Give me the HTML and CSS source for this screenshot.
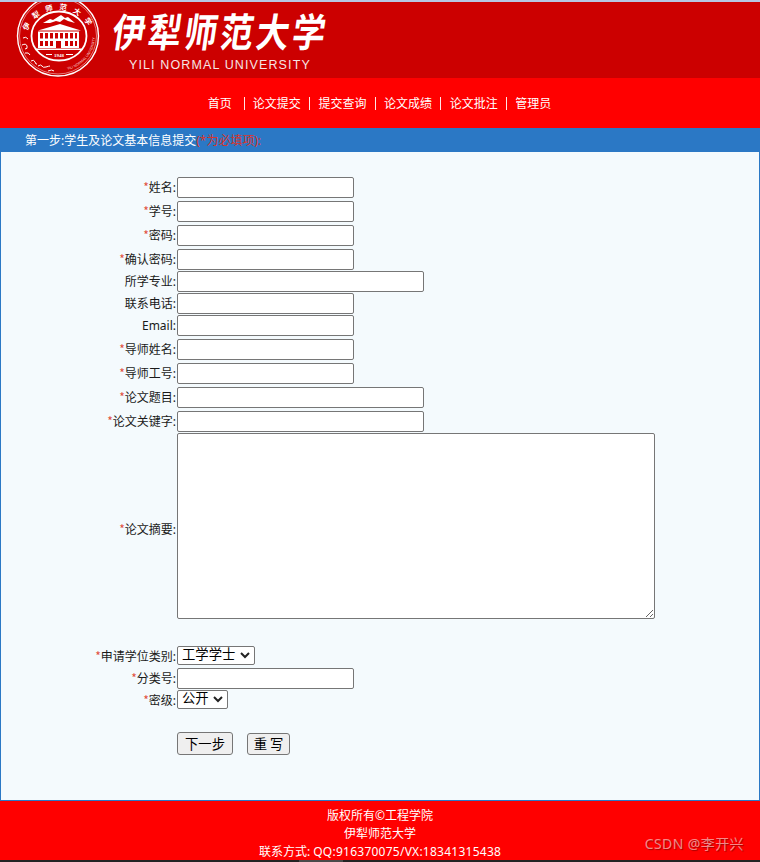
FILE: index.html
```html
<!DOCTYPE html>
<html lang="zh">
<head>
<meta charset="utf-8">
<title>伊犁师范大学</title>
<link rel="stylesheet" href="styles.css">
</head>
<body>
<div class="page">
  <header class="banner">
    <svg class="seal" viewBox="0 2 110 76" width="110" height="76" aria-hidden="true">
      <defs>
        <path id="arcTop" d="M27 38 A32 28 0 0 1 91 38"/>
        <path id="arcBottom" d="M68 69.700 A37 35 0 0 0 95 38"/>
      </defs>
      <ellipse class="ring" cx="58" cy="36" rx="40.500" ry="40"/>
      <ellipse class="ring-thin" cx="58" cy="36" rx="38.500" ry="38"/>
      <ellipse class="ring ring-inner" cx="59" cy="36" rx="27.500" ry="24.500"/>
      <text class="seal-cn"><textPath href="#arcTop" startOffset="50%" text-anchor="middle">伊犁师范大学</textPath></text>
      <text class="seal-en"><textPath href="#arcBottom" startOffset="50%" text-anchor="middle">YILI NORMAL UNIVERSITY</textPath></text>
      <path class="line" d="M23 38 q3 -2 5 1 M22 45 q4 -2 5 1 t-2 3 M25 53 q4 -1 5 2 M31 61 q3 -2 4 1 t2 2 M38 66 q3 -2 4 0 t4 1 t4 -1 M48 71 q4 -2 6 0"/>
      <path class="fill" d="M43 23 L50 19 L53 20 L61 15 L65 18 L68 17 L75 23 L68 21 L64 19 L60 22 L56 21 L50 23Z"/>
      <path class="fill" d="M60 24 L38 30.500 L81 30.500Z"/>
      <rect class="fill" x="38" y="31.500" width="41" height="16.500"/>
      <g class="win">
        <rect x="40" y="33" width="3" height="5.500"/><rect x="45" y="33" width="3" height="5.500"/><rect x="50" y="33" width="3" height="5.500"/><rect x="55" y="33" width="3" height="5.500"/><rect x="60" y="33" width="3" height="5.500"/><rect x="65" y="33" width="3" height="5.500"/><rect x="70" y="33" width="3" height="5.500"/><rect x="75" y="33" width="2" height="5.500"/>
        <rect x="40" y="41" width="3" height="5"/><rect x="45" y="41" width="3" height="5"/><rect x="50" y="41" width="3" height="5"/><rect x="56" y="41" width="5" height="7"/><rect x="65" y="41" width="3" height="5"/><rect x="70" y="41" width="3" height="5"/><rect x="75" y="41" width="2" height="5"/>
      </g>
      <rect class="fill" x="36" y="48.500" width="46" height="1.500"/>
      <path class="line" d="M46 54.500 H52 M66 54.500 H73"/>
      <text class="seal-year" x="59" y="56.500" text-anchor="middle">1948</text>
    </svg>
    <div class="brand">
      <div class="brand-cn">伊犁师范大学</div>
      <div class="brand-en">YILI NORMAL UNIVERSITY</div>
    </div>
  </header>

  <nav class="nav">
    <a class="nav-link nav-first">首页</a><span class="sep"></span>
    <a class="nav-link">论文提交</a><span class="sep"></span>
    <a class="nav-link">提交查询</a><span class="sep"></span>
    <a class="nav-link">论文成绩</a><span class="sep"></span>
    <a class="nav-link">论文批注</a><span class="sep"></span>
    <a class="nav-link">管理员</a>
  </nav>

  <div class="step">第一步:学生及论文基本信息提交<span class="step-note">(*为必填项):</span></div>

  <form class="form">
    <div class="row"><label class="lbl"><i>*</i>姓名:</label><input class="field" type="text"></div>
    <div class="row"><label class="lbl"><i>*</i>学号:</label><input class="field" type="text"></div>
    <div class="row"><label class="lbl"><i>*</i>密码:</label><input class="field" type="password"></div>
    <div class="row"><label class="lbl"><i>*</i>确认密码:</label><input class="field" type="password"></div>
    <div class="row row-plain"><label class="lbl">所学专业:</label><input class="field field-wide" type="text"></div>
    <div class="row row-plain"><label class="lbl">联系电话:</label><input class="field" type="text"></div>
    <div class="row row-plain"><label class="lbl">Email:</label><input class="field" type="text"></div>
    <div class="row"><label class="lbl"><i>*</i>导师姓名:</label><input class="field" type="text"></div>
    <div class="row"><label class="lbl"><i>*</i>导师工号:</label><input class="field" type="text"></div>
    <div class="row"><label class="lbl"><i>*</i>论文题目:</label><input class="field field-wide" type="text"></div>
    <div class="row"><label class="lbl"><i>*</i>论文关键字:</label><input class="field field-wide" type="text"></div>
    <div class="row row-area"><label class="lbl"><i>*</i>论文摘要:</label><textarea class="area"></textarea></div>
    <div class="row row-select row-degree"><label class="lbl"><i>*</i>申请学位类别:</label><select class="pick pick-degree"><option>工学学士</option></select></div>
    <div class="row"><label class="lbl"><i>*</i>分类号:</label><input class="field" type="text"></div>
    <div class="row row-select"><label class="lbl"><i>*</i>密级:</label><select class="pick pick-level"><option>公开</option></select></div>
    <div class="actions">
      <button class="btn btn-next" type="button">下一步</button>
      <button class="btn btn-reset" type="reset">重 写</button>
    </div>
  </form>

  <footer class="footer">
    <div>版权所有©工程学院</div>
    <div>伊犁师范大学</div>
    <div>联系方式: <span class="contact">QQ:916370075/VX:18341315438</span></div>
    <span class="watermark">CSDN @李开兴</span>
  </footer>
  <div class="strip"><span class="strip-tab"></span></div>
</div>
</body>
</html>
```

FILE: styles.css
```css
* { box-sizing: border-box; }
html, body { margin: 0; padding: 0; }
body {
  font-family: "Noto Sans", "Noto Sans CJK SC", sans-serif;
  font-size: 12px;
  color: #111;
  background: #fff;
}
.page {
  position: relative;
  width: 760px;
  height: 862px;
  overflow: hidden;
  border-top: 2px solid #b7c6e2;
}

/* banner */
.banner {
  display: flex;
  height: 76px;
  background: #cc0000;
}
.seal { display: block; flex: none; }
.ring { fill: none; stroke: #fff; stroke-width: 1.4; }
.ring-inner { stroke-width: 1.800; }
.ring-thin { fill: none; stroke: #f5c8c8; stroke-width: .6; }
.fill { fill: #fff; }
.win rect { fill: #cc0000; }
.line { fill: none; stroke: #fff; stroke-width: 1; }
.seal-cn { fill: #fff; font-family: "Noto Sans CJK SC", sans-serif; font-size: 7.500px; letter-spacing: 6px; font-weight: 700; }
.seal-en { fill: #fbdcdc; font-family: "Liberation Sans", sans-serif; font-size: 3.600px; }
.seal-year { fill: #fff; font-size: 5px; font-family: "Liberation Serif", serif; font-weight: 700; }
.brand { display: flex; flex-direction: column; margin-left: 3px; }
.brand-cn {
  height: 48px;
  margin: 4px 0 4px;
  font-family: "Noto Sans CJK SC", sans-serif;
  font-size: 33px;
  line-height: 48px;
  font-weight: 700;
  letter-spacing: 3px;
  color: #fff;
  white-space: nowrap;
  transform: scaleY(1.2) skewX(-10deg);
  transform-origin: left center;
}
.brand-en {
  margin-left: 16px;
  font-family: "Liberation Sans", sans-serif;
  font-size: 12.500px;
  line-height: 14px;
  letter-spacing: 1.120px;
  color: #f6e4e4;
  white-space: nowrap;
}

/* navigation */
.nav {
  display: flex;
  align-items: center;
  justify-content: center;
  gap: 8.300px;
  height: 50px;
  background: #ff0000;
  padding-right: 1px;
}
.nav-link { padding-top: 2px; color: #fff; line-height: 18px; }
.nav-first { margin-right: 3.500px; }
.sep { width: 1px; height: 13px; background: #ffe6e6; }

/* step bar */
.step {
  height: 24px;
  line-height: 26px;
  padding-left: 25px;
  background: #2b78c5;
  color: #fff;
}
.step-note { color: #d8352c; }

/* form */
.form {
  height: 649px;
  padding-top: 22px;
  background: #f4fafd;
  border: solid #2b78c5;
  border-width: 0 1px 1px;
}
.row { display: flex; align-items: flex-end; height: 24px; }
.row-plain { height: 22px; }
.row-area { height: auto; align-items: center; padding-top: 1px; }
.row-select { height: 20px; }
.row-degree { height: 19px; margin-top: 27px; }
.lbl {
  flex: none;
  width: 175px;
  text-align: right;
  line-height: 20px;
  white-space: nowrap;
  color: #1a1a1a;
}
.row-area .lbl { margin-top: 7px; }
.row-select .lbl { line-height: 17px; }
.lbl i {
  font-family: "Noto Sans CJK SC", sans-serif;
  font-style: normal;
  line-height: 1;
  color: #e0503c;
}
.field {
  display: block;
  width: 177px;
  height: 21px;
  margin: 0 0 0 1px;
  padding: 1px 2px;
  border: 1px solid #767676;
  border-radius: 2px;
  background: #fff;
}
.field-wide { width: 247px; }
.area {
  display: block;
  width: 478px;
  height: 186px;
  margin: 0 0 0 1px;
  padding: 2px;
  border: 1px solid #767676;
  border-radius: 2px;
  background: #fff;
  resize: both;
}
.pick {
  display: block;
  height: 19px;
  margin: 0 0 0 1px;
  padding: 0 0 2px 4px;
  border: 1px solid #767676;
  border-radius: 2px;
  appearance: none;
  -webkit-appearance: none;
  background: #fff url("data:image/svg+xml,%3Csvg xmlns='http://www.w3.org/2000/svg' width='10' height='7'%3E%3Cpath d='M1 1 L5 5 L9 1' fill='none' stroke='%23222' stroke-width='2'/%3E%3C/svg%3E") no-repeat right 4px center;
  color: #000;
  font-family: "Noto Sans", "Noto Sans CJK SC", sans-serif;
  font-size: 13.330px;
  line-height: 15px;
}
.pick-degree { width: 78px; }
.pick-level { width: 51px; }
.actions {
  display: flex;
  align-items: flex-end;
  gap: 14px;
  margin: 23px 0 0 176px;
}
.btn {
  margin: 0;
  padding: 0;
  border: 1px solid #767676;
  border-radius: 3px;
  background: #efefef;
  color: #000;
  font-family: "Noto Sans CJK SC", sans-serif;
  font-size: 13.330px;
  line-height: 18px;
}
.btn-next { width: 56px; height: 23px; }
.btn-reset { width: 43px; height: 22px; }

/* footer */
.footer {
  position: relative;
  height: 59px;
  padding-top: 6px;
  background: #ff0000;
  color: #fff;
  text-align: center;
  line-height: 18px;
}
.contact { letter-spacing: .25px; }
.watermark {
  position: absolute;
  right: 16px;
  top: 34px;
  font-size: 14px;
  line-height: 18px;
  letter-spacing: .4px;
  color: rgba(255, 255, 255, .55);
  text-shadow: 1px 1px 1px rgba(0, 0, 0, .35);
}
.strip { display: flex; height: 2px; background: #232323; }
.strip-tab { width: 44px; margin-left: 299px; background: #4a4a4a; }
```
